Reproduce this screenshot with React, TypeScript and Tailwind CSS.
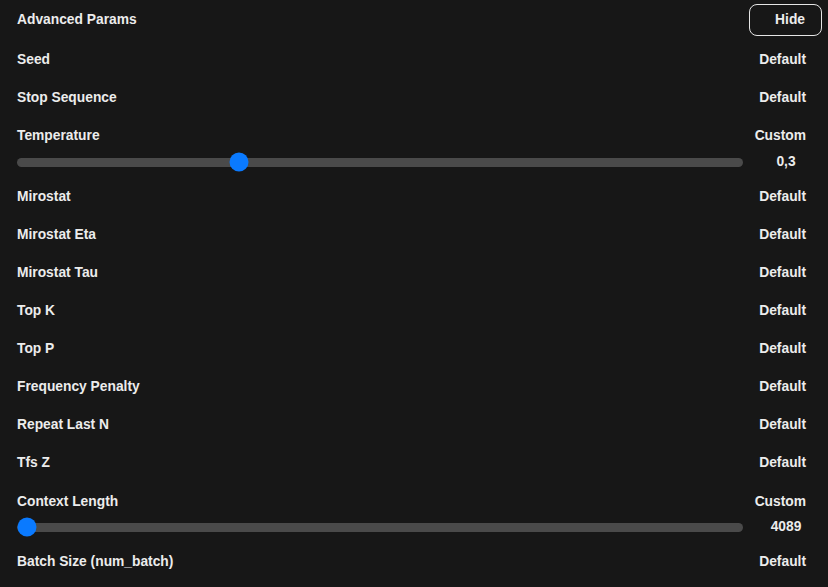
import React from 'react'

type Param = { name: string; custom?: { value: string; pct: number } }

const params: Param[] = [
  { name: 'Seed' },
  { name: 'Stop Sequence' },
  { name: 'Temperature', custom: { value: '0,3', pct: 30.1 } },
  { name: 'Mirostat' },
  { name: 'Mirostat Eta' },
  { name: 'Mirostat Tau' },
  { name: 'Top K' },
  { name: 'Top P' },
  { name: 'Frequency Penalty' },
  { name: 'Repeat Last N' },
  { name: 'Tfs Z' },
  { name: 'Context Length', custom: { value: '4089', pct: 0 } },
  { name: 'Batch Size (num_batch)' },
]

function Slider({ pct }: { pct: number }) {
  return (
    <div className="relative flex-1 h-[9px] rounded-full bg-[#4a4a4a]">
      <div
        className="absolute top-1/2 w-[19px] h-[19px] -translate-y-1/2 -translate-x-1/2 rounded-full bg-[#0a7aff]"
        style={{ left: `calc(9.5px + (100% - 19px) * ${pct / 100})` }}
      />
    </div>
  )
}

export default function App() {
  return (
    <div
      className="w-[828px] h-[587px] overflow-hidden bg-[#171717] text-[#ececec] text-[13.8px] font-bold pl-[17px] pr-[6px]"
      style={{ fontFamily: '"Liberation Sans", Arial, sans-serif' }}
    >
      {/* Header */}
      <div className="h-[40px] flex items-center justify-between">
        <span>Advanced Params</span>
        <button className="w-[73px] h-[32px] rounded-lg border-[1.5px] border-[#e5e5e5] px-4 text-right">
          Hide
        </button>
      </div>

      <div className="mt-[1.5px]">
        {params.map((p) =>
          p.custom ? (
            <div key={p.name} className="pt-[9px]">
              <div className="h-5 flex items-center justify-between">
                <span>{p.name}</span>
                <span className="pr-4">Custom</span>
              </div>
              <div className="h-[31px] flex items-center">
                <Slider pct={p.custom.pct} />
                <span className="ml-[7px] w-[72px] text-center">{p.custom.value}</span>
              </div>
            </div>
          ) : (
            <div key={p.name} className="h-[38.15px] flex items-center justify-between">
              <span>{p.name}</span>
              <span className="pr-4">Default</span>
            </div>
          )
        )}
      </div>
    </div>
  )
}
